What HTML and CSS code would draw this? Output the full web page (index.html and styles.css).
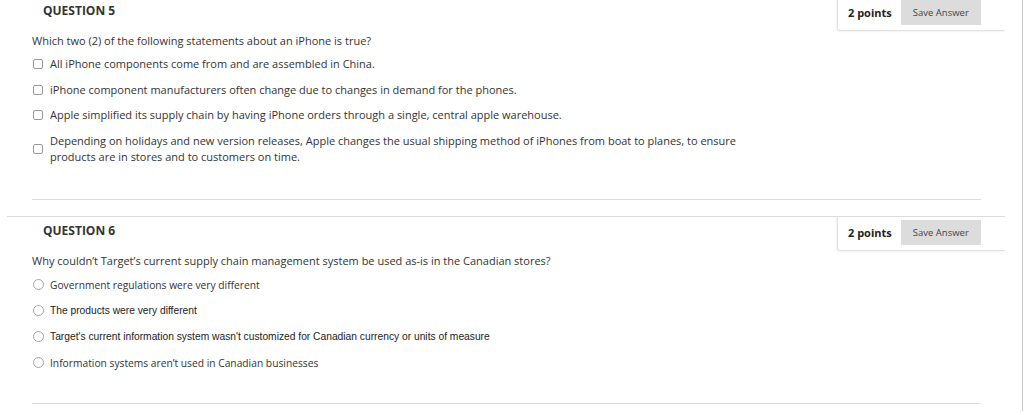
FILE: index.html
```html
<!DOCTYPE html>
<html>
<head>
<meta charset="utf-8">
<link rel="stylesheet" href="styles.css">
</head>
<body>
<div class="page">
  <section class="question first">
    <div class="q-head">
      <h3 class="q-title">QUESTION 5</h3>
      <div class="points-box">
        <span class="points">2 points</span>
        <span class="save-btn">Save Answer</span>
      </div>
    </div>
    <div class="q-body">
      <p class="q-text">Which two (2) of the following statements about an iPhone is true?</p>
      <ul class="options">
        <li class="option"><span class="check"></span><span class="label">All iPhone components come from and are assembled in China.</span></li>
        <li class="option"><span class="check"></span><span class="label">iPhone component manufacturers often change due to changes in demand for the phones.</span></li>
        <li class="option"><span class="check"></span><span class="label">Apple simplified its supply chain by having iPhone orders through a single, central apple warehouse.</span></li>
        <li class="option"><span class="check"></span><span class="label">Depending on holidays and new version releases, Apple changes the usual shipping method of iPhones from boat to planes, to ensure products are in stores and to customers on time.</span></li>
      </ul>
    </div>
  </section>
  <section class="question">
    <div class="q-head">
      <h3 class="q-title">QUESTION 6</h3>
      <div class="points-box">
        <span class="points">2 points</span>
        <span class="save-btn">Save Answer</span>
      </div>
    </div>
    <div class="q-body radio-q">
      <p class="q-text">Why couldn’t Target’s current supply chain management system be used as-is in the Canadian stores?</p>
      <ul class="options">
        <li class="option"><span class="radio"></span><span class="label small">Government regulations were very different</span></li>
        <li class="option"><span class="radio"></span><span class="label arial">The products were very different</span></li>
        <li class="option"><span class="radio"></span><span class="label arial">Target's current information system wasn't customized for Canadian currency or units of measure</span></li>
        <li class="option"><span class="radio"></span><span class="label small">Information systems aren’t used in Canadian businesses</span></li>
      </ul>
    </div>
  </section>
</div>
</body>
</html>
```

FILE: styles.css
```css
html, body {
  margin: 0;
  padding: 0;
  background: #fff;
}
body {
  font-family: "Open Sans", "Liberation Sans", sans-serif;
  color: #333;
  overflow: hidden;
}
.page {
  width: 1022px;
  height: 415px;
  border-right: 1px solid #c8c8c8;
}
.question {
  margin-left: 7px;
  width: 998px;
  border-top: 1px solid #dcdcdc;
  margin-top: 16px;
}
.question.first {
  margin-top: -4px;
}
.q-head {
  display: flex;
  justify-content: space-between;
  align-items: flex-start;
  height: 34px;
}
.q-title {
  margin: 6px 0 0 36px;
  font-size: 12px;
  line-height: 16px;
  font-weight: 700;
  color: #333;
}
.points-box {
  display: flex;
  align-items: flex-start;
  box-sizing: border-box;
  height: 34px;
  width: 168px;
  padding: 3px 24px 0 10px;
  border-left: 1px solid #e2e2e2;
  border-bottom: 1px solid #e2e2e2;
  border-bottom-left-radius: 3px;
  box-shadow: -1px 1px 2px rgba(0,0,0,0.06);
}
.points {
  font-size: 11px;
  line-height: 25px;
  font-weight: 700;
  color: #222;
  width: 53px;
}
.save-btn {
  display: flex;
  align-items: center;
  justify-content: center;
  width: 81px;
  height: 25px;
  background: #dcdcdc;
  font-size: 9.5px;
  color: #444;
}
.q-body {
  margin-left: 25px;
  width: 949px;
  border-bottom: 1px solid #dcdcdc;
  padding: 2px 0 34px 0;
}
.q-text {
  margin: 0 0 7px 0;
  font-size: 11px;
  line-height: 16px;
}
.options {
  list-style: none;
  margin: 0;
  padding: 0;
  display: flex;
  flex-direction: column;
  gap: 9.5px;
}
.radio-q {
  padding-bottom: 32px;
}
.radio-q .q-text {
  margin-bottom: 8px;
}
.radio-q .options {
  gap: 10px;
}
.option {
  display: flex;
  align-items: center;
  gap: 7px;
  padding-left: 1px;
}
.check {
  flex: none;
  box-sizing: border-box;
  width: 10px;
  height: 10px;
  border: 1px solid #9a9a9a;
  border-radius: 2px;
  background: #fff;
}
.radio {
  flex: none;
  box-sizing: border-box;
  width: 11px;
  height: 11px;
  border: 1px solid #a5a5a5;
  border-radius: 50%;
  background: #fff;
  margin-right: -1px;
}
.label {
  font-size: 11px;
  line-height: 16px;
  max-width: 700px;
}
.label.small {
  font-size: 10.25px;
}
.label.arial {
  font-family: "Liberation Sans", Arial, sans-serif;
  font-size: 10.25px;
  color: #222;
}
```
